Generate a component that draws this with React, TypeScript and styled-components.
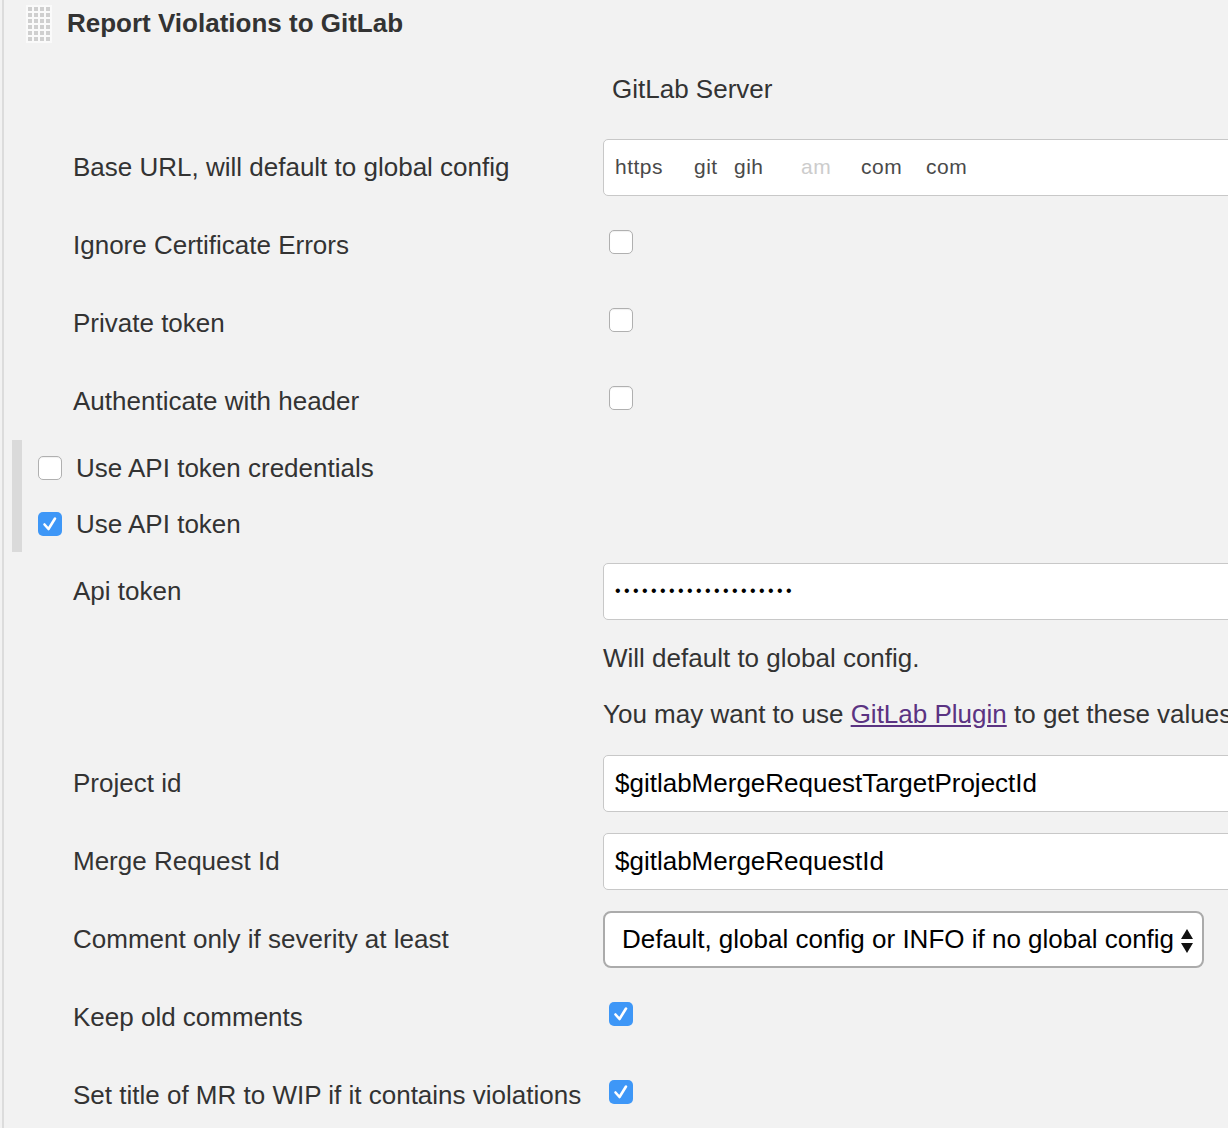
import { createGlobalStyle, styled } from 'styled-components';

const GlobalStyle = createGlobalStyle`
  html, body {
    margin: 0;
    padding: 0;
    background: #f2f2f2;
    overflow: hidden;
  }
  body {
    font-family: "Liberation Sans", Arial, Helvetica, sans-serif;
    color: #333;
  }
`;

const rows = [
  { label: 'Ignore Certificate Errors', checked: false },
  { label: 'Private token', checked: false },
  { label: 'Authenticate with header', checked: false },
];

// the base url is smudged in the screenshot, only fragments are readable
const urlBits = [
  { text: 'https', w: 79, faint: false },
  { text: 'git', w: 40, faint: false },
  { text: 'gih', w: 67, faint: false },
  { text: 'am', w: 60, faint: true },
  { text: 'com', w: 65, faint: false },
  { text: 'com', w: 60, faint: false },
];

export default function App() {
  return (
    <Page>
      <GlobalStyle />
      <Header>
        <Grip />
        <Title>Report Violations to GitLab</Title>
      </Header>

      <SectionRow>
        <span />
        <SectionName>GitLab Server</SectionName>
      </SectionRow>

      <Row>
        <Label>Base URL, will default to global config</Label>
        <TextBox>
          {urlBits.map((b, i) => (
            <UrlBit key={i} $w={b.w} $faint={b.faint}>
              {b.text}
            </UrlBit>
          ))}
        </TextBox>
      </Row>

      {rows.map((r) => (
        <Row key={r.label}>
          <Label>{r.label}</Label>
          <Control>
            <CheckBox checked={r.checked} />
          </Control>
        </Row>
      ))}

      <Nested>
        <NestedItem>
          <CheckBox checked={false} inline />
          <NestedLabel>Use API token credentials</NestedLabel>
        </NestedItem>
        <NestedItem>
          <CheckBox checked inline />
          <NestedLabel>Use API token</NestedLabel>
        </NestedItem>
      </Nested>

      <Row>
        <Label>Api token</Label>
        <TextBox>
          <Dots>••••••••••••••••••••</Dots>
        </TextBox>
      </Row>

      <Help>
        <HelpLine>Will default to global config.</HelpLine>
        <HelpLine>
          You may want to use <Link href="#">GitLab Plugin</Link> to get these
          values.
        </HelpLine>
      </Help>

      <Row>
        <Label>Project id</Label>
        <TextBox>$gitlabMergeRequestTargetProjectId</TextBox>
      </Row>

      <Row>
        <Label>Merge Request Id</Label>
        <TextBox>$gitlabMergeRequestId</TextBox>
      </Row>

      <Row>
        <Label>Comment only if severity at least</Label>
        <Control>
          <Select>
            Default, global config or INFO if no global config
            <Arrows viewBox="0 0 14 26">
              <path d="M7 1 L13 11 H1 Z" fill="#111" />
              <path d="M7 25 L13 15 H1 Z" fill="#111" />
            </Arrows>
          </Select>
        </Control>
      </Row>

      <Row>
        <Label>Keep old comments</Label>
        <Control>
          <CheckBox checked />
        </Control>
      </Row>

      <Row>
        <Label>Set title of MR to WIP if it contains violations</Label>
        <Control>
          <CheckBox checked />
        </Control>
      </Row>
    </Page>
  );
}

function Grip() {
  const dots = [];
  for (let r = 0; r < 6; r++) {
    for (let c = 0; c < 4; c++) {
      dots.push(
        <rect key={`${r}-${c}`} x={2 + c * 6} y={2 + r * 6} width="4" height="4" fill="#cfcfcf" />
      );
    }
  }
  return (
    <GripSvg viewBox="0 0 26 38" width="26" height="38">
      <rect x="0" y="0" width="26" height="38" fill="#fafafa" />
      {dots}
    </GripSvg>
  );
}

function CheckBox({ checked, inline }: { checked: boolean; inline?: boolean }) {
  return (
    <Box $checked={checked} $inline={inline}>
      {checked && (
        <svg viewBox="0 0 24 24" width="24" height="24">
          <path
            d="M6.5 12.5 L10.5 17 L17 6.5"
            stroke="#fff"
            strokeWidth="2.6"
            fill="none"
            strokeLinecap="round"
            strokeLinejoin="round"
          />
        </svg>
      )}
    </Box>
  );
}

const Page = styled.div`
  margin-left: 2px;
  border-left: 2px solid #dcdcdc;
  min-height: 1128px;
  width: 1300px;
`;

const Header = styled.div`
  display: flex;
  align-items: center;
  height: 46px;
  padding-left: 22px;
  gap: 15px;
`;

const GripSvg = styled.svg`
  display: block;
  margin-top: 2px;
`;

const Title = styled.div`
  font-size: 26px;
  font-weight: bold;
  color: #333;
`;

const Row = styled.div`
  display: grid;
  grid-template-columns: 530px 660px;
  align-items: center;
  height: 78px;
  padding-left: 69px;
`;

const SectionRow = styled(Row)`
  margin-top: 4px;
`;

const SectionName = styled.div`
  font-size: 26px;
  padding-left: 9px;
`;

const Label = styled.div`
  font-size: 26px;
  color: #333;
  white-space: nowrap;
`;

const Control = styled.div`
  display: flex;
  align-items: center;
`;

const TextBox = styled.div`
  box-sizing: border-box;
  height: 57px;
  display: flex;
  align-items: center;
  padding-left: 11px;
  background: #fff;
  border: 1px solid #c8c8c8;
  border-radius: 5px;
  font-size: 26px;
  color: #000;
  white-space: nowrap;
`;

const UrlBit = styled.span<{ $w: number; $faint: boolean }>`
  display: inline-block;
  width: ${(p) => p.$w}px;
  flex-shrink: 0;
  font-size: 21px;
  font-weight: 300;
  letter-spacing: 0.5px;
  color: ${(p) => (p.$faint ? '#c4c4c4' : '#2a2a2a')};
  opacity: 0.85;
`;

const Dots = styled.span`
  font-size: 16px;
  letter-spacing: 3.4px;
`;

const Box = styled.span<{ $checked: boolean; $inline?: boolean }>`
  box-sizing: border-box;
  display: inline-flex;
  width: 24px;
  height: 24px;
  border-radius: 5px;
  margin-left: ${(p) => (p.$inline ? 0 : 6)}px;
  margin-bottom: ${(p) => (p.$inline ? 0 : 6)}px;
  background: ${(p) => (p.$checked ? '#3e97f7' : '#fff')};
  border: ${(p) => (p.$checked ? 'none' : '1px solid #b0b0b0')};
  box-shadow: ${(p) => (p.$checked ? 'none' : 'inset 0 1px 1px rgba(0,0,0,0.06)')};
  flex-shrink: 0;
`;

const Nested = styled.div`
  margin-left: 8px;
  border-left: 10px solid #dadada;
  padding-left: 16px;
`;

const NestedItem = styled.div`
  display: flex;
  align-items: center;
  gap: 14px;
  height: 56px;
`;

const NestedLabel = styled.span`
  font-size: 26px;
  color: #333;
`;

const Help = styled.div`
  padding-left: 599px;
  margin-bottom: 2px;
`;

const HelpLine = styled.div`
  height: 56px;
  line-height: 56px;
  font-size: 26px;
  color: #333;
  white-space: nowrap;
`;

const Link = styled.a`
  color: #5b3382;
  text-decoration: underline;
`;

const Select = styled.div`
  position: relative;
  box-sizing: border-box;
  width: 601px;
  height: 57px;
  display: flex;
  align-items: center;
  padding-left: 17px;
  background: #fff;
  border: 2px solid #ababab;
  border-radius: 8px;
  font-size: 26px;
  color: #000;
  white-space: nowrap;
`;

const Arrows = styled.svg`
  position: absolute;
  right: 8px;
  top: 15px;
  width: 14px;
  height: 26px;
`;
